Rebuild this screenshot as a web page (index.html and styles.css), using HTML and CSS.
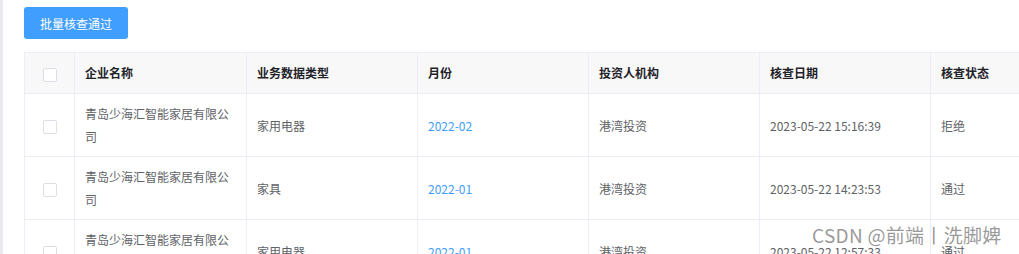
FILE: index.html
```html
<!DOCTYPE html>
<html lang="zh-CN">

<head>
    <meta charset="UTF-8">
    <meta name="viewport" content="width=device-width, initial-scale=1.0">
    <title>核查列表</title>
    <link rel="stylesheet" href="styles.css">
</head>

<body>
    <div class="layout">
        <div class="side-strip"></div>
        <div class="main">
            <div class="toolbar">
                <button class="btn-primary" type="button">批量核查通过</button>
            </div>
            <table class="data-table">
                <colgroup>
                    <col class="col-check">
                    <col class="col-name">
                    <col class="col-normal">
                    <col class="col-normal">
                    <col class="col-normal">
                    <col class="col-normal">
                    <col class="col-normal">
                </colgroup>
                <thead>
                    <tr>
                        <th class="check-cell"><span class="checkbox"></span></th>
                        <th>企业名称</th>
                        <th>业务数据类型</th>
                        <th>月份</th>
                        <th>投资人机构</th>
                        <th>核查日期</th>
                        <th>核查状态</th>
                    </tr>
                </thead>
                <tbody>
                    <tr>
                        <td class="check-cell"><span class="checkbox"></span></td>
                        <td>青岛少海汇智能家居有限公司</td>
                        <td>家用电器</td>
                        <td><a class="link" href="#">2022-02</a></td>
                        <td>港湾投资</td>
                        <td>2023-05-22 15:16:39</td>
                        <td>拒绝</td>
                    </tr>
                    <tr>
                        <td class="check-cell"><span class="checkbox"></span></td>
                        <td>青岛少海汇智能家居有限公司</td>
                        <td>家具</td>
                        <td><a class="link" href="#">2022-01</a></td>
                        <td>港湾投资</td>
                        <td>2023-05-22 14:23:53</td>
                        <td>通过</td>
                    </tr>
                    <tr>
                        <td class="check-cell"><span class="checkbox"></span></td>
                        <td>青岛少海汇智能家居有限公司</td>
                        <td>家用电器</td>
                        <td><a class="link" href="#">2022-01</a></td>
                        <td>港湾投资</td>
                        <td>2023-05-22 12:57:33</td>
                        <td>通过</td>
                    </tr>
                </tbody>
            </table>
        </div>
    </div>
    <div class="watermark">CSDN @前端丨洗脚婢</div>
</body>

</html>
```

FILE: styles.css
```css
body {
    font-family: "Noto Sans CJK SC", "Noto Sans", sans-serif;
    font-size: 12px;
    margin: 0;
    padding: 0;
    background-color: #fff;
    overflow: hidden;
    position: relative;
    height: 254px;
}

.layout {
    display: flex;
    height: 100%;
}

.side-strip {
    width: 3px;
    flex-shrink: 0;
    background-color: #e9eaee;
}

.main {
    padding: 7px 0 0 21px;
}

.toolbar {
    margin-bottom: 13px;
}

.btn-primary {
    font-family: inherit;
    font-size: 12px;
    width: 104px;
    height: 32px;
    padding: 0;
    color: #fff;
    background-color: #409eff;
    border: none;
    border-radius: 3px;
    cursor: pointer;
}

.data-table {
    border-collapse: collapse;
    table-layout: fixed;
    width: 1077px;
    border-left: 1px solid #ebeef5;
    border-top: 1px solid #ebeef5;
}

.col-check {
    width: 50px;
}

.col-name {
    width: 172px;
}

.col-normal {
    width: 171px;
}

.data-table th,
.data-table td {
    border-right: 1px solid #ebeef5;
    border-bottom: 1px solid #ebeef5;
    padding: 8px 10px;
    line-height: 23px;
    text-align: left;
    vertical-align: middle;
}

.data-table th {
    padding-bottom: 9px;
    background-color: #f8f8f9;
    color: #1f2329;
    font-weight: bold;
}

.data-table td {
    color: #606266;
}

.data-table .check-cell {
    padding: 0;
    text-align: center;
}

.checkbox {
    display: inline-block;
    width: 14px;
    height: 14px;
    box-sizing: border-box;
    border: 1px solid #dcdfe6;
    border-radius: 2px;
    background-color: #fff;
    vertical-align: middle;
}

.link {
    color: #409eff;
    text-decoration: none;
}

.watermark {
    position: absolute;
    left: 812px;
    top: 221px;
    font-size: 19px;
    color: rgba(120, 120, 120, 0.75);
    text-shadow: 0 0 2px #fff, 0 0 2px #fff;
    letter-spacing: 0.3px;
}
```
